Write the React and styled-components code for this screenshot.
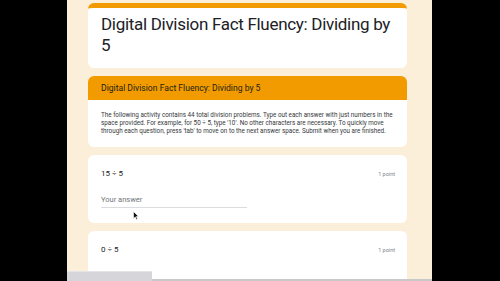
import React from "react";
import styled, { createGlobalStyle } from "styled-components";

const GlobalStyle = createGlobalStyle`
  html, body {
    margin: 0;
    padding: 0;
    background: #000;
    overflow: hidden;
  }
  body {
    font-family: Roboto, "Liberation Sans", Arial, sans-serif;
  }
`;

const Screen = styled.div`
  position: relative;
  display: flex;
  width: 500px;
  height: 281px;
  overflow: hidden;
  background: #000;
`;

const LeftBlack = styled.div`
  width: 67px;
  flex-shrink: 0;
`;

const FormArea = styled.div`
  width: 365px;
  flex-shrink: 0;
  background: #fcefd9;
  padding: 3px 25px 0 21px;
  box-sizing: border-box;
  display: flex;
  flex-direction: column;
  gap: 8px;
  overflow: hidden;
`;

const Card = styled.div`
  background: #fff;
  border-radius: 6px;
  flex-shrink: 0;
  overflow: hidden;
  border-top: ${(p) => (p.$accent ? "5px solid #f29b00" : "none")};
`;

const TitleCard = styled(Card)`
  padding: 6px 10px 12px 13px;
`;

const Title = styled.h1`
  margin: 0;
  font-family: Roboto, "Open Sans", sans-serif;
  font-weight: 400;
  font-size: 17px;
  letter-spacing: -0.3px;
  line-height: 21px;
  color: #202124;
`;

const SectionHeader = styled.div`
  background: #f29b00;
  height: 24px;
  padding: 0 13px;
  display: flex;
  align-items: center;
  font-size: 8.6px;
  color: #231d10;
`;

const SectionBody = styled.div`
  padding: 11px 13px 12px;
  font-size: 6.3px;
  line-height: 8px;
  color: #35383b;
`;

const QuestionCard = styled(Card)`
  padding: 14px 12px 0 13px;
  height: ${(p) => p.$height}px;
  box-sizing: border-box;
`;

const QuestionRow = styled.div`
  display: flex;
  justify-content: space-between;
  align-items: center;
`;

const Question = styled.div`
  font-size: 8px;
  color: #202124;
`;

const Points = styled.div`
  font-size: 5.5px;
  color: #80868b;
`;

const AnswerField = styled.div`
  margin-top: 17px;
  width: 146px;
  padding-bottom: 3px;
  border-bottom: 1px solid #dadce0;
  font-size: 7.5px;
  color: #70757a;
`;

const BottomBar = styled.div`
  position: absolute;
  left: 67px;
  bottom: 0;
  width: 365px;
  height: 2px;
  background: #c9c9cc;
`;

const Tab = styled.div`
  position: absolute;
  left: 67px;
  bottom: 0;
  width: 85px;
  height: 9px;
  background: #d6d6da;
  border-top: 1px solid #e4e4e8;
`;

const Cursor = styled.svg`
  position: absolute;
  left: 133px;
  top: 211px;
  width: 6px;
  height: 9px;
`;

const questions = [
  { text: "15 ÷ 5", height: 68, answer: true },
  { text: "0 ÷ 5", height: 68, answer: false },
];

export default function App() {
  return (
    <Screen>
      <GlobalStyle />
      <LeftBlack />
      <FormArea>
        <TitleCard $accent>
          <Title>Digital Division Fact Fluency: Dividing by 5</Title>
        </TitleCard>

        <Card>
          <SectionHeader>Digital Division Fact Fluency: Dividing by 5</SectionHeader>
          <SectionBody>
            The following activity contains 44 total division problems. Type
            out each answer with just numbers in the space provided. For
            example, for 50 ÷ 5, type '10'. No other characters are necessary.
            To quickly move through each question, press 'tab' to move on to the
            next answer space. Submit when you are finished.
          </SectionBody>
        </Card>

        {questions.map((q) => (
          <QuestionCard key={q.text} $height={q.height}>
            <QuestionRow>
              <Question>{q.text}</Question>
              <Points>1 point</Points>
            </QuestionRow>
            {q.answer && <AnswerField>Your answer</AnswerField>}
          </QuestionCard>
        ))}
      </FormArea>

      <BottomBar />
      <Tab />
      <Cursor viewBox="0 0 6 9">
        <path d="M0.5 0.5 L0.5 7.5 L2.2 5.9 L3.4 8.6 L4.5 8.1 L3.3 5.5 L5.5 5.5 Z" fill="#111" stroke="#fff" strokeWidth="0.6" />
      </Cursor>
    </Screen>
  );
}
